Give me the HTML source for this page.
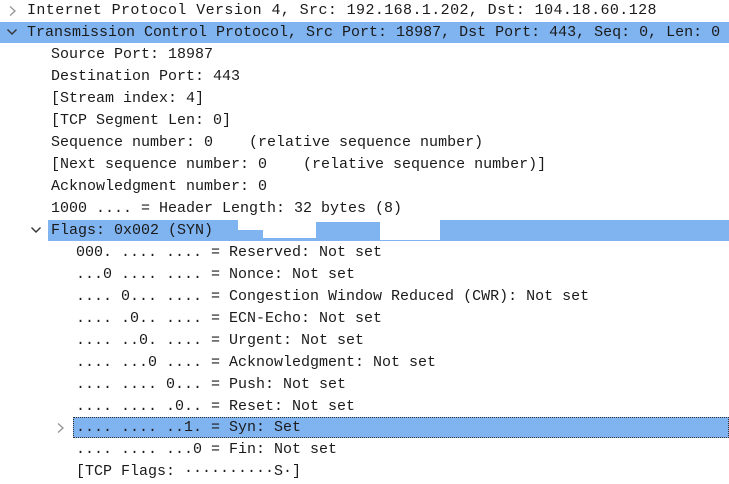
<!DOCTYPE html>
<html><head><style>
body{margin:0;width:729px;height:484px;overflow:hidden;background:#fff;font-family:"Liberation Mono",monospace;font-size:15px;color:#1a1a1a}
.r{position:absolute;left:0;right:0;height:22px;line-height:22px;white-space:pre}
.t{position:absolute;top:0}
.a{position:absolute}
.hl{position:absolute;background:#80b4f0}
</style></head><body>
<div class="hl" style="left:0;top:22px;width:729px;height:21px"></div>
<div class="hl" style="left:48px;top:220px;width:681px;height:21px"></div>
<div style="position:absolute;left:238px;top:217px;width:78px;height:13px;background:#fff"></div>
<div style="position:absolute;left:263px;top:217px;width:53px;height:21px;background:#fff"></div>
<div style="position:absolute;left:316px;top:217px;width:64px;height:5px;background:#fff"></div>
<div style="position:absolute;left:380px;top:217px;width:60px;height:23px;background:#fff"></div>
<div class="hl" style="left:73px;top:417px;width:656px;height:21px;outline:1px dotted #333;outline-offset:-1px"></div>

<svg class="a" style="left:8px;top:5px" width="10" height="12"><path d="M2 1.5L7 6L2 10.5" fill="none" stroke="#999" stroke-width="1.4"/></svg>
<svg class="a" style="left:6px;top:27px" width="12" height="10"><path d="M1.5 2.5L6 7L10.5 2.5" fill="none" stroke="#333" stroke-width="1.4"/></svg>
<svg class="a" style="left:30px;top:225px" width="12" height="10"><path d="M1.5 2.5L6 7L10.5 2.5" fill="none" stroke="#333" stroke-width="1.4"/></svg>
<svg class="a" style="left:56px;top:422px" width="10" height="12"><path d="M2 1.5L7 6L2 10.5" fill="none" stroke="#999" stroke-width="1.4"/></svg>

<div class="r" style="top:0"><span class="t" style="left:27px;letter-spacing:0.4px">Internet Protocol Version 4, Src: 192.168.1.202, Dst: 104.18.60.128</span></div>
<div class="r" style="top:22px"><span class="t" style="left:27px">Transmission Control Protocol, Src Port: 18987, Dst Port: 443, Seq: 0, Len: 0</span></div>
<div class="r" style="top:44px"><span class="t" style="left:51px">Source Port: 18987</span></div>
<div class="r" style="top:66px"><span class="t" style="left:51px">Destination Port: 443</span></div>
<div class="r" style="top:88px"><span class="t" style="left:51px">[Stream index: 4]</span></div>
<div class="r" style="top:110px"><span class="t" style="left:51px">[TCP Segment Len: 0]</span></div>
<div class="r" style="top:132px"><span class="t" style="left:51px">Sequence number: 0    (relative sequence number)</span></div>
<div class="r" style="top:154px"><span class="t" style="left:51px">[Next sequence number: 0    (relative sequence number)]</span></div>
<div class="r" style="top:176px"><span class="t" style="left:51px">Acknowledgment number: 0</span></div>
<div class="r" style="top:198px"><span class="t" style="left:51px">1000 .... = Header Length: 32 bytes (8)</span></div>
<div class="r" style="top:220px"><span class="t" style="left:51px">Flags: 0x002 (SYN)</span></div>
<div class="r" style="top:242px"><span class="t" style="left:76px">000. .... .... = Reserved: Not set</span></div>
<div class="r" style="top:264px"><span class="t" style="left:76px">...0 .... .... = Nonce: Not set</span></div>
<div class="r" style="top:286px"><span class="t" style="left:76px">.... 0... .... = Congestion Window Reduced (CWR): Not set</span></div>
<div class="r" style="top:308px"><span class="t" style="left:76px">.... .0.. .... = ECN-Echo: Not set</span></div>
<div class="r" style="top:330px"><span class="t" style="left:76px">.... ..0. .... = Urgent: Not set</span></div>
<div class="r" style="top:352px"><span class="t" style="left:76px">.... ...0 .... = Acknowledgment: Not set</span></div>
<div class="r" style="top:374px"><span class="t" style="left:76px">.... .... 0... = Push: Not set</span></div>
<div class="r" style="top:396px"><span class="t" style="left:76px">.... .... .0.. = Reset: Not set</span></div>
<div class="r" style="top:417px"><span class="t" style="left:76px">.... .... ..1. = Syn: Set</span></div>
<div class="r" style="top:439px"><span class="t" style="left:76px">.... .... ...0 = Fin: Not set</span></div>
<div class="r" style="top:461px"><span class="t" style="left:76px">[TCP Flags: ··········S·]</span></div>
</body></html>
